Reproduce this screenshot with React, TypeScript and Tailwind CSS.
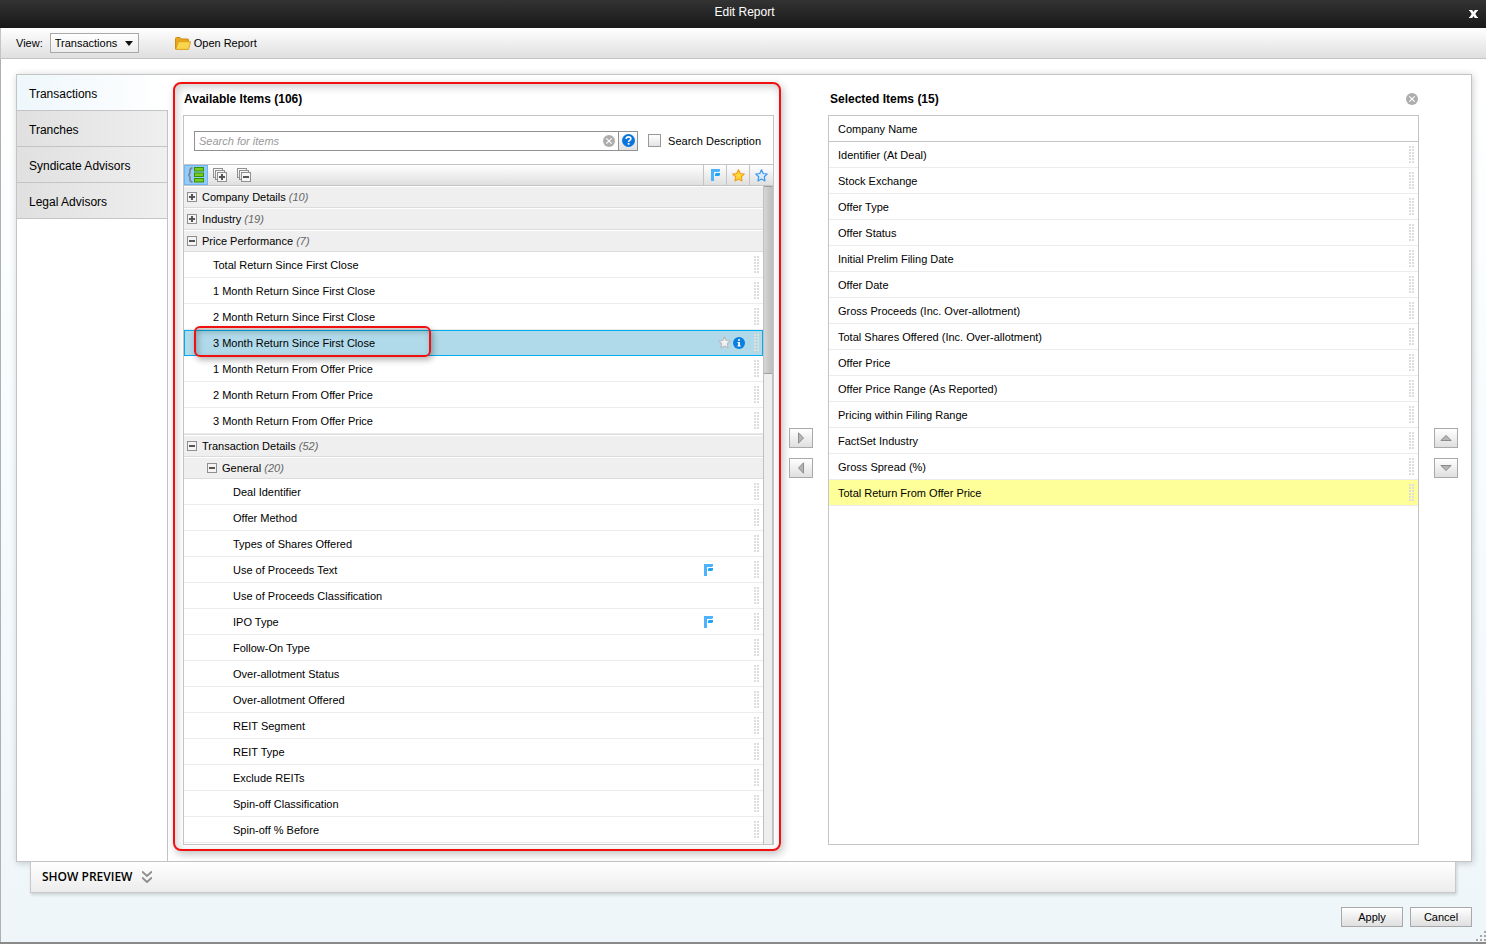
import { useState } from 'react';
import { clsx } from 'clsx';

interface Item {
  name: string;
  factset?: boolean;
}

interface Group {
  id: string;
  name: string;
  count: number;
  nested?: boolean;
  items: Item[];
}

const TABS = ['Transactions', 'Tranches', 'Syndicate Advisors', 'Legal Advisors'];

const GROUPS: Group[] = [
  { id: 'company', name: 'Company Details', count: 10, items: [] },
  { id: 'industry', name: 'Industry', count: 19, items: [] },
  {
    id: 'price',
    name: 'Price Performance',
    count: 7,
    items: [
      { name: 'Total Return Since First Close' },
      { name: '1 Month Return Since First Close' },
      { name: '2 Month Return Since First Close' },
      { name: '3 Month Return Since First Close' },
      { name: '1 Month Return From Offer Price' },
      { name: '2 Month Return From Offer Price' },
      { name: '3 Month Return From Offer Price' },
    ],
  },
  { id: 'transaction', name: 'Transaction Details', count: 52, items: [] },
  {
    id: 'general',
    name: 'General',
    count: 20,
    nested: true,
    items: [
      { name: 'Deal Identifier' },
      { name: 'Offer Method' },
      { name: 'Types of Shares Offered' },
      { name: 'Use of Proceeds Text', factset: true },
      { name: 'Use of Proceeds Classification' },
      { name: 'IPO Type', factset: true },
      { name: 'Follow-On Type' },
      { name: 'Over-allotment Status' },
      { name: 'Over-allotment Offered' },
      { name: 'REIT Segment' },
      { name: 'REIT Type' },
      { name: 'Exclude REITs' },
      { name: 'Spin-off Classification' },
      { name: 'Spin-off % Before' },
    ],
  },
];

const SELECTED_ITEMS = [
  'Company Name',
  'Identifier (At Deal)',
  'Stock Exchange',
  'Offer Type',
  'Offer Status',
  'Initial Prelim Filing Date',
  'Offer Date',
  'Gross Proceeds (Inc. Over-allotment)',
  'Total Shares Offered (Inc. Over-allotment)',
  'Offer Price',
  'Offer Price Range (As Reported)',
  'Pricing within Filing Range',
  'FactSet Industry',
  'Gross Spread (%)',
  'Total Return From Offer Price',
];

const BUTTON = 'flex items-center justify-center border border-[#a9a9a9] bg-linear-to-b from-white to-[#dfdfdf]';

const STAR = 'M6.5 0.8 L8.2 4.5 L12.2 5 L9.3 7.8 L10 11.9 L6.5 9.9 L3 11.9 L3.7 7.8 L0.8 5 L4.8 4.5 Z';

function StarIcon({ fill, stroke }: { fill: string; stroke: string }) {
  return (
    <svg width="13" height="13" viewBox="0 0 13 13">
      <path d={STAR} fill={fill} stroke={stroke} strokeWidth="1.2" strokeLinejoin="round" />
    </svg>
  );
}

function FactSetIcon() {
  return (
    <svg width="9" height="12" viewBox="0 0 9 12">
      <path d="M0 0 H9 V2 L8 3 H3 V12 H0 Z" fill="#4db3fc" />
      <path d="M5 4 H9 V6 L8 7 H4 V5 Z" fill="#1fa5f5" />
    </svg>
  );
}

function ClearIcon() {
  return (
    <svg width="12" height="12" viewBox="0 0 12 12">
      <circle cx="6" cy="6" r="6" fill="#adadad" />
      <path d="M3.3 3.3 L8.7 8.7 M8.7 3.3 L3.3 8.7" stroke="#fff" strokeWidth="1.1" />
    </svg>
  );
}

function DragHandle() {
  return (
    <svg width="5" height="17" viewBox="0 0 5 17" fill="#dedede" className="shrink-0" shapeRendering="crispEdges">
      {[0, 3, 6, 9, 12, 15].map((y) => (
        <path key={y} d={`M0 ${y} h2 v2 h-2 Z M3 ${y} h2 v2 h-2 Z`} />
      ))}
    </svg>
  );
}

function StackIcon({ plus }: { plus?: boolean }) {
  return (
    <svg width="14" height="14" viewBox="0 0 14 14" fill="none" stroke="#909090" shapeRendering="crispEdges">
      <path d="M2.5 9.5 H0.5 V0.5 H9.5 V2.5 M4.5 11.5 H2.5 V2.5 H11.5 V4.5" />
      <rect x="4.5" y="4.5" width="9" height="9" fill="#f6f6f6" />
      <path d="M6 9 H12" stroke="#555" strokeWidth="2" />
      {plus && <path d="M9 6 V12" stroke="#555" strokeWidth="2" />}
    </svg>
  );
}

function TreeIcon() {
  return (
    <svg width="16" height="16" viewBox="0 0 16 16">
      <path d="M4.5 1 Q2 1 2 3.5 V6 L0.5 8 L2 10 V12.5 Q2 15 4.5 15" fill="none" stroke="#7d8a95" strokeWidth="1.8" />
      {[0.5, 6, 11.5].map((y) => (
        <rect key={y} x="6.5" y={y} width="9" height="3.5" fill="#7ccb22" stroke="#319400" />
      ))}
    </svg>
  );
}

function FolderIcon() {
  return (
    <svg width="16" height="13" viewBox="0 0 16 13">
      <path d="M0.5 12 V1.5 Q0.5 0.5 1.5 0.5 H5 L6.5 2 H12.5 Q13.5 2 13.5 3 V12 Z" fill="#e9a51e" stroke="#cf8a10" />
      <path d="M0.8 12.4 L3 5.5 Q3.2 4.7 4 4.7 H15.5 L13.8 11.5 Q13.6 12.4 12.8 12.4 Z" fill="#f8d54c" stroke="#dc9d1c" strokeWidth="0.9" />
    </svg>
  );
}

function GroupRow({ group, open, onToggle }: { group: Group; open: boolean; onToggle: () => void }) {
  return (
    <div
      className={clsx(
        'flex h-[22px] items-center gap-[5px] border-t border-b border-t-white border-b-[#dcdcdc] bg-[#efefef]',
        group.nested ? 'pl-[23px]' : 'pl-[3px]'
      )}
    >
      <button type="button" aria-label={`Toggle ${group.name}`} aria-expanded={open} onClick={onToggle}>
        <svg width="10" height="10" viewBox="0 0 10 10" shapeRendering="crispEdges" className="block">
          <rect x="0.5" y="0.5" width="9" height="9" fill="#f4f4f4" stroke="#8f8f8f" />
          <path d="M2 5 H8" stroke="#555" strokeWidth="2" />
          {!open && <path d="M5 2 V8" stroke="#555" strokeWidth="2" />}
        </svg>
      </button>
      <span>
        {group.name} <i className="text-[#666]">({group.count})</i>
      </span>
    </div>
  );
}

function ItemRow({ item, nested, active, onSelect }: { item: Item; nested?: boolean; active: boolean; onSelect: () => void }) {
  return (
    <div
      onClick={onSelect}
      className={clsx(
        'relative flex h-[26px] items-center border-b pr-1',
        nested ? 'pl-[49px]' : 'pl-[29px]',
        active ? 'border-[#00adef] bg-[#b0d9e9] shadow-[inset_0_1px_#00adef,inset_1px_0_#00adef,inset_-1px_0_#00adef]' : 'border-[#ececec]'
      )}
    >
      <span className="flex-1">{item.name}</span>
      {item.factset && <span className="mr-[41px]"><FactSetIcon /></span>}
      {active && (
        <span className="mr-[9px] flex items-center gap-[2px]">
          <StarIcon fill="#f3f3f3" stroke="#b9bcc0" />
          <svg width="12" height="12" viewBox="0 0 12 12">
            <circle cx="6" cy="6" r="6" fill="#0a7fe0" />
            <path d="M5 2.2 h2 v1.6 h-2 Z M4.4 5 H7 V8.6 H7.8 V9.6 H4.4 V8.6 H5.2 V6 H4.4 Z" fill="#fff" />
          </svg>
        </span>
      )}
      <DragHandle />
      {active && (
        <span className="pointer-events-none absolute -top-1 left-[10px] h-[31px] w-[237px] rounded-md border-2 border-[#f01010] shadow-[2px_3px_6px_rgba(0,0,0,0.3),inset_2px_3px_6px_rgba(0,0,0,0.25)]" />
      )}
    </div>
  );
}

function AvailableItems() {
  const [open, setOpen] = useState<string[]>(['price', 'transaction', 'general']);
  const [active, setActive] = useState('3 Month Return Since First Close');

  const toggle = (id: string) => {
    setOpen((prev) => (prev.includes(id) ? prev.filter((g) => g !== id) : [...prev, id]));
  };

  return (
    <section className="mt-[7px] mb-[10px] ml-[5px] flex min-w-0 flex-1 flex-col rounded-lg border-2 border-[#f01010] pr-[5px] pb-1 pl-2 shadow-[2px_3px_8px_rgba(0,0,0,0.25),inset_2px_3px_8px_rgba(0,0,0,0.2)]">
      <h2 className="flex h-[31px] items-center pb-[2px] pl-px text-xs font-bold">Available Items (106)</h2>
      <div className="flex min-h-0 flex-1 flex-col border border-[#c4c4c4] bg-white">
        <div className="flex h-12 shrink-0 items-center pt-px pr-3 pl-[10px]">
          <div className="flex h-5 flex-1 items-center border border-[#919191]">
            <input
              type="text"
              aria-label="Search for items"
              placeholder="Search for items"
              className="h-full min-w-0 flex-1 px-1 outline-none placeholder:text-[#999] placeholder:italic"
            />
            <button type="button" aria-label="Clear search" className="mr-[3px]"><ClearIcon /></button>
            <button type="button" aria-label="Help" className="flex h-full w-[19px] items-center justify-center border-l border-[#919191] bg-linear-to-b from-white to-[#e2e2e2]">
              <svg width="13" height="13" viewBox="0 0 13 13">
                <circle cx="6.5" cy="6.5" r="6.5" fill="#0b74dc" />
                <path d="M4.2 5 Q4.2 2.9 6.5 2.9 Q8.8 2.9 8.8 4.7 Q8.8 5.8 7.6 6.4 Q6.6 6.9 6.6 8" fill="none" stroke="#fff" strokeWidth="1.6" />
                <rect x="5.7" y="8.9" width="1.8" height="1.8" fill="#fff" />
              </svg>
            </button>
          </div>
          <input
            id="search-description"
            type="checkbox"
            className="mr-[7px] ml-[10px] size-[13px] appearance-none border border-[#999] bg-linear-to-b from-white to-[#e4e4e4] checked:bg-[#0b74dc]"
          />
          <label htmlFor="search-description">Search Description</label>
        </div>

        <div className="flex h-[22px] shrink-0 border-t border-b border-[#c4c4c4] bg-linear-to-b from-white to-[#dfdfdf]">
          <button type="button" aria-label="Tree view" className="flex w-6 items-center justify-center border border-[#70b6f5] bg-[#93cbfb]"><TreeIcon /></button>
          <button type="button" aria-label="Expand all" className="flex w-6 items-center justify-center"><StackIcon plus /></button>
          <button type="button" aria-label="Collapse all" className="flex w-6 items-center justify-center"><StackIcon /></button>
          <div className="flex-1" />
          <button type="button" aria-label="FactSet items" className="flex w-[23px] items-center justify-center border-l border-[#c4c4c4]"><FactSetIcon /></button>
          <button type="button" aria-label="Favorites" className="flex w-[23px] items-center justify-center border-l border-[#c4c4c4]"><StarIcon fill="#ffd83a" stroke="#f3a01c" /></button>
          <button type="button" aria-label="Add favorite" className="flex w-6 items-center justify-center border-l border-[#c4c4c4]"><StarIcon fill="#d9ecfd" stroke="#3d97ee" /></button>
        </div>

        <div className="flex min-h-0 flex-1">
          <div className="min-w-0 flex-1 overflow-hidden">
            {GROUPS.map((group) => (
              <div key={group.id} className={clsx(group.id === 'price' && 'border-b border-[#dcdcdc]')}>
                <GroupRow group={group} open={open.includes(group.id)} onToggle={() => toggle(group.id)} />
                {open.includes(group.id) && group.items.map((item) => (
                  <ItemRow
                    key={item.name}
                    item={item}
                    nested={group.nested}
                    active={item.name === active}
                    onSelect={() => setActive(item.name)}
                  />
                ))}
              </div>
            ))}
          </div>
          <div className="w-[10px] border-r border-l border-[#c0c0c0] bg-[#eee]">
            <div className="h-[188px] border-t border-b border-[#a0a0a0] bg-linear-to-r from-[#d6d6d6] to-[#bebebe]" />
          </div>
        </div>
      </div>
    </section>
  );
}

function SelectedItems() {
  return (
    <section className="mt-2 mb-4 flex min-w-0 flex-1 flex-col">
      <div className="flex h-8 items-center justify-between pr-px pl-[2px]">
        <h2 className="text-xs font-bold">Selected Items (15)</h2>
        <button type="button" aria-label="Remove all"><ClearIcon /></button>
      </div>
      <ul className="flex-1 overflow-hidden border border-[#c4c4c4]">
        {SELECTED_ITEMS.map((name, index) => (
          <li
            key={name}
            className={clsx(
              'flex h-[26px] items-center justify-between border-b pr-1 pl-[9px]',
              index === 0 ? 'border-[#c4c4c4]' : 'border-[#ececec]',
              index === SELECTED_ITEMS.length - 1 && 'bg-[#ffff99]'
            )}
          >
            {name}
            {index > 0 && <DragHandle />}
          </li>
        ))}
      </ul>
    </section>
  );
}

function MoveButton({ label, path }: { label: string; path: string }) {
  return (
    <button type="button" aria-label={label} className={clsx(BUTTON, 'h-5 w-6')}>
      <svg width="12" height="12" viewBox="0 0 12 12">
        <path d={path} fill="#b5b5b5" stroke="#8c8c8c" />
      </svg>
    </button>
  );
}

export default function App() {
  const [tab, setTab] = useState('Transactions');

  return (
    <div className="relative flex h-screen min-h-[640px] flex-col border-b-2 border-[#8a8a8a] font-['Liberation_Sans',Arial,sans-serif] text-[11px] leading-[14px] text-black">
      <header className="flex h-7 shrink-0 items-center bg-linear-to-b from-[#333] to-[#191919] pr-2 pb-1 pl-5 text-white">
        <h1 className="flex-1 text-center text-xs">Edit Report</h1>
        <button type="button" aria-label="Close" className="mt-1">
          <svg width="9" height="8" viewBox="0 0 9 8">
            <path d="M0 0 H3.2 L4.5 2 L5.8 0 H9 V1 H8.2 L6.3 4 L8.2 7 H9 V8 H5.8 L4.5 6 L3.2 8 H0 V7 H0.8 L2.7 4 L0.8 1 H0 Z" fill="#fff" />
          </svg>
        </button>
      </header>

      <div className="flex h-[31px] shrink-0 items-center border-b border-l border-[#c4c4c4] bg-linear-to-b from-white to-[#dfdfdf] pl-[15px]">
        <label htmlFor="view" className="mr-[7px]">View:</label>
        <div className="relative">
          <select id="view" defaultValue="Transactions" className="block h-5 w-[89px] appearance-none border border-[#a9a9a9] bg-linear-to-b from-white to-[#ececec] pl-1">
            {TABS.map((name) => <option key={name}>{name}</option>)}
          </select>
          <svg width="8" height="5" viewBox="0 0 8 5" className="pointer-events-none absolute top-2 right-[6px]">
            <path d="M0 0 H8 L4 5 Z" fill="#111" />
          </svg>
        </div>
        <button type="button" className="ml-9 flex items-center gap-[3px]">
          <FolderIcon />
          Open Report
        </button>
      </div>

      <main className="flex min-h-0 flex-1 flex-col border-l border-[#b0b0b0] bg-linear-to-b from-white via-[#f6fbfd] to-[#eef6fa] pt-[15px] pr-[14px] pl-[15px]">
        <div className="flex min-h-0 flex-1 border border-[#c4c4c4] bg-white shadow-[1px_1px_7px_rgba(0,0,0,0.2)]">
          <nav className="flex w-[151px] flex-col">
            {TABS.map((name) => (
              <button
                key={name}
                type="button"
                onClick={() => setTab(name)}
                className={clsx(
                  'flex h-9 items-center border-b border-[#c4c4c4] pt-[2px] pl-3 text-xs',
                  name === tab ? 'bg-linear-to-r from-[#eef7fb] to-white' : 'border-r bg-linear-to-r from-[#e0e0e0] to-[#efefef]'
                )}
              >
                {name}
              </button>
            ))}
            <div className="flex-1 border-r border-[#c4c4c4]" />
          </nav>

          <AvailableItems />

          <div className="mr-[15px] ml-2 flex flex-col justify-center gap-[10px] pb-[30px]">
            <MoveButton label="Add item" path="M3.5 0.8 L8.5 6 L3.5 11.2 Z" />
            <MoveButton label="Remove item" path="M8.5 0.8 L3.5 6 L8.5 11.2 Z" />
          </div>

          <SelectedItems />

          <div className="mr-[13px] ml-[15px] flex flex-col justify-center gap-[10px] pb-[30px]">
            <MoveButton label="Move up" path="M0.8 8.5 L6 3.5 L11.2 8.5 Z" />
            <MoveButton label="Move down" path="M0.8 3.5 L6 8.5 L11.2 3.5 Z" />
          </div>
        </div>

        <button
          type="button"
          className="mr-4 ml-[14px] flex h-[31px] shrink-0 items-center gap-[10px] border-r border-b border-l border-[#c9c9c9] bg-linear-to-b from-white to-[#ececec] pl-[11px] font-['Open_Sans',sans-serif] text-xs font-semibold shadow-[1px_2px_3px_rgba(0,0,0,0.15)]"
        >
          SHOW PREVIEW
          <svg width="10" height="12" viewBox="0 0 10 12" fill="none" stroke="#8f8f8f" strokeWidth="2">
            <path d="M0 0.5 L5 5 L10 0.5 M0 6.5 L5 11 L10 6.5" />
          </svg>
        </button>

        <footer className="flex shrink-0 justify-end gap-[7px] pt-[14px] pb-[15px]">
          <button type="button" className={clsx(BUTTON, 'h-5 w-[62px]')}>Apply</button>
          <button type="button" className={clsx(BUTTON, 'h-5 w-[62px]')}>Cancel</button>
        </footer>
      </main>

      <svg width="10" height="10" viewBox="0 0 10 10" fill="#a5a5a5" className="absolute right-0 bottom-px">
        <path d="M8 0 h2 v2 h-2 Z M4 4 h2 v2 h-2 Z M8 4 h2 v2 h-2 Z M0 8 h2 v2 h-2 Z M4 8 h2 v2 h-2 Z M8 8 h2 v2 h-2 Z" />
      </svg>
    </div>
  );
}
